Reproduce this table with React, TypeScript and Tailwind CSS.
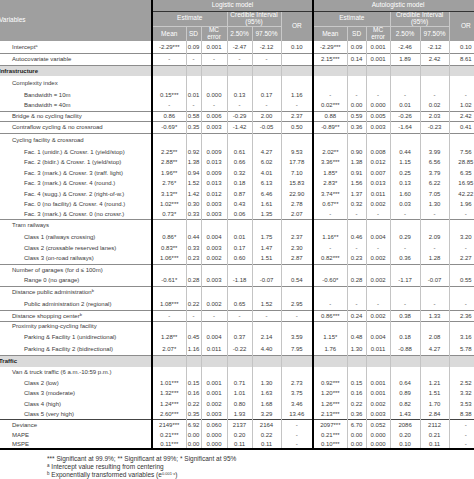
type Kind = "data" | "head" | "section";

interface Row {
  label: string;
  sup?: string;
  lvl: 0 | 1 | 2;
  kind: Kind;
  h: string;
  l?: string;
  a?: string;
  line?: "gray" | "dark";
}

const dash = "-|-|-|-|-|-";

const rows: Row[] = [
  { label: "Intercept", sup: "a", lvl: 1, kind: "data", h: "h-[12px]", l: "-2.29***|0.09|0.001|-2.47|-2.12|0.10", a: "-2.29***|0.09|0.001|-2.46|-2.12|0.10", line: "gray" },
  { label: "Autocovariate variable", lvl: 1, kind: "data", h: "h-[12px]", l: "-|-|-|-|-| ", a: "2.15***|0.14|0.001|1.89|2.42|8.61", line: "gray" },
  { label: "Infrastructure", lvl: 0, kind: "section", h: "h-[11px]" },
  { label: "Complexity index", lvl: 1, kind: "head", h: "h-[13px]" },
  { label: "Bandwidth = 10m", lvl: 2, kind: "data", h: "h-[11px]", l: "0.15***|0.01|0.000|0.13|0.17|1.16", a: dash },
  { label: "Bandwidth = 40m", lvl: 2, kind: "data", h: "h-[11px]", l: dash, a: "0.02***|0.00|0.000|0.01|0.02|1.02", line: "gray" },
  { label: "Bridge & no cycling facility", lvl: 1, kind: "data", h: "h-[10px]", l: "0.86|0.58|0.006|-0.29|2.00|2.37", a: "0.88|0.59|0.005|-0.26|2.03|2.42", line: "gray" },
  { label: "Contraflow cycling & no crossroad", lvl: 1, kind: "data", h: "h-[12px]", l: "-0.69*|0.35|0.003|-1.42|-0.05|0.50", a: "-0.89**|0.36|0.003|-1.64|-0.23|0.41", line: "gray" },
  { label: "Cycling facility & crossroad", lvl: 1, kind: "head", h: "h-[13px]" },
  { label: "Fac. 1 (unidir.) & Crossr. 1 (yield/stop)", lvl: 2, kind: "data", h: "h-[11px]", l: "2.25**|0.92|0.009|0.61|4.27|9.53", a: "2.02**|0.90|0.008|0.44|3.99|7.56" },
  { label: "Fac. 2 (bidir.) & Crossr. 1 (yield/stop)", lvl: 2, kind: "data", h: "h-[10px]", l: "2.88**|1.38|0.013|0.66|6.02|17.78", a: "3.36***|1.38|0.012|1.15|6.56|28.85" },
  { label: "Fac. 3 (mark.) & Crossr. 3 (traff. light)", lvl: 2, kind: "data", h: "h-[11px]", l: "1.96**|0.94|0.009|0.32|4.01|7.10", a: "1.85*|0.91|0.007|0.25|3.79|6.35" },
  { label: "Fac. 3 (mark.) & Crossr. 4 (round.)", lvl: 2, kind: "data", h: "h-[10px]", l: "2.76*|1.52|0.013|0.18|6.13|15.83", a: "2.83*|1.56|0.013|0.13|6.22|16.95" },
  { label: "Fac. 4 (sugg.) & Crossr. 2 (right-of-w.)", lvl: 2, kind: "data", h: "h-[11px]", l: "3.13**|1.42|0.012|0.87|6.46|22.90", a: "3.74***|1.37|0.011|1.60|7.05|42.22" },
  { label: "Fac. 0 (no facility) & Crossr. 4 (round.)", lvl: 2, kind: "data", h: "h-[10px]", l: "1.02***|0.30|0.003|0.43|1.61|2.78", a: "0.67**|0.32|0.002|0.03|1.30|1.96" },
  { label: "Fac. 3 (mark.) & Crossr. 0 (no crossr.)", lvl: 2, kind: "data", h: "h-[10px]", l: "0.73*|0.33|0.003|0.06|1.35|2.07", a: dash, line: "gray" },
  { label: "Tram railways", lvl: 1, kind: "head", h: "h-[12px]" },
  { label: "Class 1 (railways crossing)", lvl: 2, kind: "data", h: "h-[11px]", l: "0.86*|0.44|0.004|0.01|1.75|2.37", a: "1.16**|0.46|0.004|0.29|2.09|3.20" },
  { label: "Class 2 (crossable reserved lanes)", lvl: 2, kind: "data", h: "h-[11px]", l: "0.83**|0.33|0.003|0.17|1.47|2.30", a: dash },
  { label: "Class 3 (on-road railways)", lvl: 2, kind: "data", h: "h-[11px]", l: "1.06***|0.23|0.002|0.60|1.51|2.87", a: "0.82***|0.23|0.002|0.36|1.28|2.27", line: "gray" },
  { label: "Number of garages (for d ≤ 100m)", lvl: 1, kind: "head", h: "h-[11px]" },
  { label: "Range 0 (no garage)", lvl: 2, kind: "data", h: "h-[11px]", l: "-0.61*|0.28|0.003|-1.18|-0.07|0.54", a: "-0.60*|0.28|0.002|-1.17|-0.07|0.55", line: "gray" },
  { label: "Distance public administration", sup: "b", lvl: 1, kind: "head", h: "h-[12px]" },
  { label: "Public administration 2 (regional)", lvl: 2, kind: "data", h: "h-[12px]", l: "1.08***|0.22|0.002|0.65|1.52|2.95", a: dash, line: "gray" },
  { label: "Distance shopping center", sup: "b", lvl: 1, kind: "data", h: "h-[11px]", l: dash, a: "0.86***|0.24|0.002|0.38|1.33|2.36", line: "gray" },
  { label: "Proximity parking-cycling facility", lvl: 1, kind: "head", h: "h-[10px]" },
  { label: "Parking & Facility 1 (unidirectional)", lvl: 2, kind: "data", h: "h-[12px]", l: "1.28**|0.45|0.004|0.37|2.14|3.59", a: "1.15*|0.48|0.004|0.18|2.08|3.16" },
  { label: "Parking & Facility 2 (bidirectional)", lvl: 2, kind: "data", h: "h-[12px]", l: "2.07*|1.16|0.011|-0.22|4.40|7.95", a: "1.76|1.30|0.011|-0.88|4.27|5.78", line: "gray" },
  { label: "Traffic", lvl: 0, kind: "section", h: "h-[12px]" },
  { label: "Van & truck traffic (6 a.m.-10:59 p.m.)", lvl: 1, kind: "head", h: "h-[10px]" },
  { label: "Class 2 (low)", lvl: 2, kind: "data", h: "h-[11px]", l: "1.01***|0.15|0.001|0.71|1.30|2.73", a: "0.92***|0.15|0.001|0.64|1.21|2.52" },
  { label: "Class 3 (moderate)", lvl: 2, kind: "data", h: "h-[10px]", l: "1.32***|0.16|0.001|1.01|1.63|3.75", a: "1.20***|0.16|0.001|0.89|1.51|3.32" },
  { label: "Class 4 (high)", lvl: 2, kind: "data", h: "h-[11px]", l: "1.24***|0.22|0.002|0.80|1.68|3.46", a: "1.26***|0.22|0.002|0.82|1.70|3.53" },
  { label: "Class 5 (very high)", lvl: 2, kind: "data", h: "h-[10px]", l: "2.60***|0.35|0.003|1.93|3.29|13.46", a: "2.13***|0.36|0.003|1.43|2.84|8.38", line: "dark" },
  { label: "Deviance", lvl: 1, kind: "data", h: "h-[11px]", l: "2149***|6.92|0.060|2137|2164|-", a: "2097***|6.70|0.052|2086|2112|-" },
  { label: "MAPE", lvl: 1, kind: "data", h: "h-[10px]", l: "0.21***|0.00|0.000|0.20|0.22|-", a: "0.21***|0.00|0.000|0.20|0.21|-" },
  { label: "MSPE", lvl: 1, kind: "data", h: "h-[9px]", l: "0.11***|0.00|0.000|0.11|0.11|-", a: "0.10***|0.00|0.000|0.10|0.11|-" },
];

const widths = ["w-[152px]", "w-[34px]", "w-[15px]", "w-[26px]", "w-[25px]", "w-[29px]", "w-[32px]", "w-[34px]", "w-[19px]", "w-[24px]", "w-[30px]", "w-[29px]", "w-[33px]"];

const indent = ["pl-0", "pl-[12px]", "pl-[24px]"];

function vline(i: number) {
  if (i === 1 || i === 7) return "border-l-2 border-l-black";
  return "border-l border-l-[#c4c4c4]";
}

function BodyRow({ row }: { row: Row }) {
  const values = [...(row.l ? row.l.split("|") : Array(6).fill("")), ...(row.a ? row.a.split("|") : Array(6).fill(""))];
  const bg = row.kind === "section" ? "bg-[#dadada]" : "bg-white";
  const line =
    row.line === "dark" ? "border-b border-b-[#444]" : row.line === "gray" ? "border-b border-b-[#8c8c8c]" : "";
  return (
    <tr className={`${row.h} ${bg} ${line}`}>
      <td className={`${indent[row.lvl]} whitespace-nowrap align-middle`}>
        <span className={row.kind === "section" ? "-ml-[1px] font-bold text-[#222]" : ""}>
          {row.label}
          {row.sup && <sup className="text-[4px]">{row.sup}</sup>}
        </span>
      </td>
      {values.map((v, i) => (
        <td key={i} className={`${vline(i + 1)} text-center whitespace-nowrap align-middle`}>
          {v}
        </td>
      ))}
    </tr>
  );
}

function ModelHeader() {
  const sub = ["Mean", "SD", "MC error", "2.50%", "97.50%"];
  return (
    <>
      <tr className="h-[11px]">
        <th rowSpan={3} className="text-left font-normal align-middle">
          <span className="-ml-[1px]">Variables</span>
        </th>
        <th colSpan={6} className="font-normal border-l-2 border-l-black border-b border-b-[#333]">
          Logistic model
        </th>
        <th colSpan={6} className="font-normal border-l-2 border-l-black border-b border-b-[#333]">
          Autologistic model
        </th>
      </tr>
      <tr className="h-[15px]">
        {[0, 1].map((m) => (
          <>
            <th key={`e${m}`} colSpan={3} className="font-normal border-l-2 border-l-black border-b border-b-[#c9c9c9]">
              Estimate
            </th>
            <th key={`c${m}`} colSpan={2} className="font-normal leading-[6.5px] border-l border-l-[#c9c9c9] border-b border-b-[#c9c9c9]">
              Credible Interval
              <br />
              (95%)
            </th>
            <th key={`o${m}`} rowSpan={2} className="font-normal border-l border-l-[#c9c9c9]">
              OR
            </th>
          </>
        ))}
      </tr>
      <tr className="h-[15px]">
        {[0, 1].map((m) =>
          sub.map((s, i) => (
            <th
              key={`${m}${i}`}
              className={`font-normal leading-[6.5px] ${i === 0 ? "border-l-2 border-l-black" : "border-l border-l-[#c9c9c9]"}`}
            >
              {s === "MC error" ? (
                <>
                  MC
                  <br />
                  error
                </>
              ) : (
                s
              )}
            </th>
          ))
        )}
      </tr>
    </>
  );
}

export default function App() {
  return (
    <div className="w-[474px] h-[479px] overflow-hidden bg-white font-['Liberation_Sans',Arial,sans-serif] text-[#3a3a3a]">
      <table className="table-fixed border-collapse w-[482px] text-[6px] leading-none">
        <colgroup>
          {widths.map((w, i) => (
            <col key={i} className={w} />
          ))}
        </colgroup>
        <thead className="bg-[#9f9f9f] text-white text-[6.5px]">
          <ModelHeader />
        </thead>
        <tbody className="border-b-2 border-b-black">
          {rows.map((r, i) => (
            <BodyRow key={i} row={r} />
          ))}
        </tbody>
      </table>
      <div className="pl-[47px] pt-[5px] text-[6.5px] leading-[8px] text-[#333]">
        <p>*** Significant at 99.9%; ** Significant at 99%; * Significant at 95%</p>
        <p>
          <sup className="text-[4.5px]">a</sup> Intercept value resulting from centering
        </p>
        <p>
          <sup className="text-[4.5px]">b</sup> Exponentially transformed variables (e
          <sup className="text-[4px]">0.001·x</sup>)
        </p>
      </div>
    </div>
  );
}
